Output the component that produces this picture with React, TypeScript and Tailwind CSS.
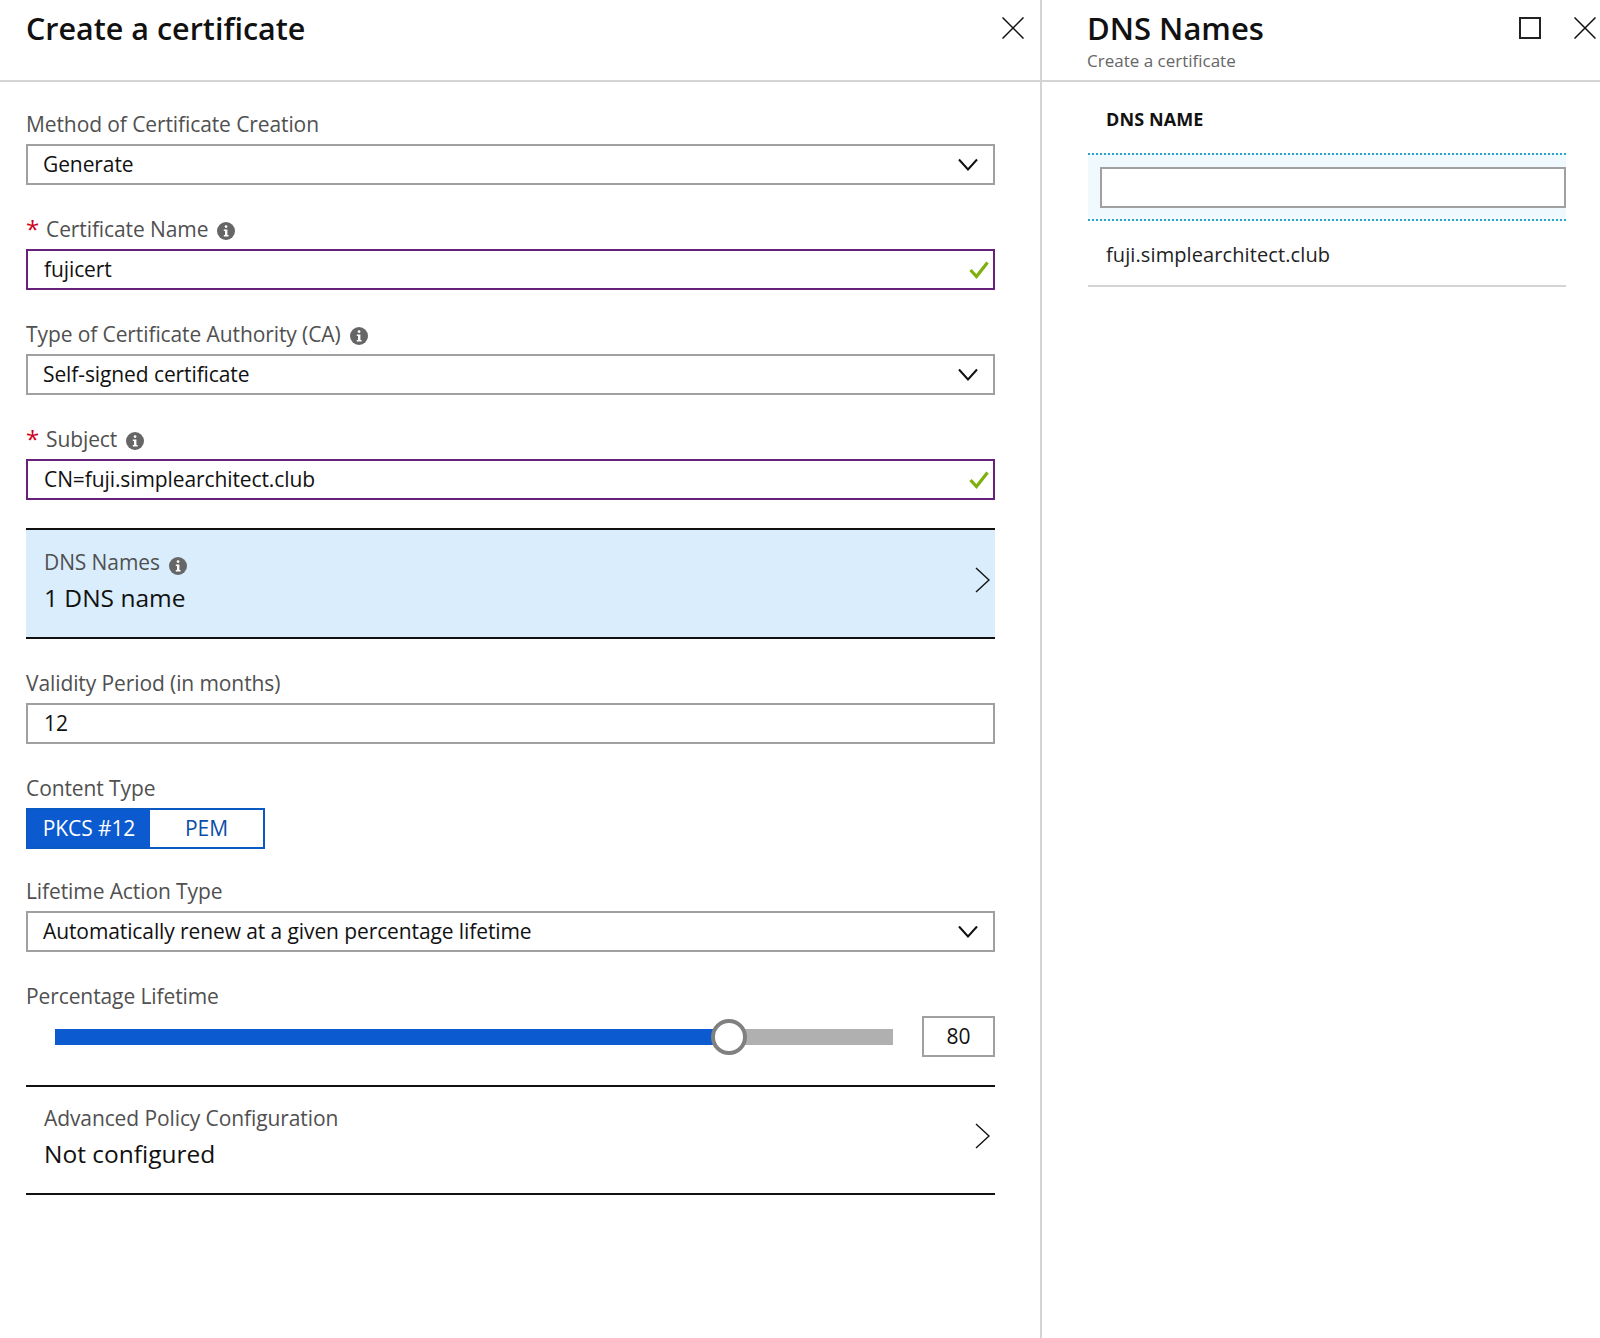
import * as React from "react"

const font = "font-['Open_Sans',sans-serif]"

function InfoIcon() {
  return (
    <svg viewBox="0 0 18 18" className="ml-[9px] mt-[6px] size-[18px] shrink-0">
      <circle cx="9" cy="9" r="9" fill="#666666" />
      <rect x="7.7" y="3.2" width="2.7" height="2.7" rx="1.3" fill="#ffffff" />
      <path d="M6.8 7.4h3.6v5.6h1.2v1.6H6.8V13h1.2V9H6.8z" fill="#ffffff" />
    </svg>
  )
}

function Chevron() {
  return (
    <svg viewBox="0 0 20 14" className="h-[14px] w-[20px]" fill="none">
      <path d="M1 1.5 10 11.5 19 1.5" stroke="#111111" strokeWidth="2" />
    </svg>
  )
}

function RightChevron() {
  return (
    <svg viewBox="0 0 15 26" className="mb-[2px] h-[26px] w-[15px]" fill="none">
      <path d="M1 1 14 13 1 25" stroke="#111111" strokeWidth="1.4" />
    </svg>
  )
}

function Check() {
  return (
    <svg viewBox="0 0 20 18" className="h-[18px] w-[20px]" fill="none">
      <path d="M1.5 9 7.5 15.5 18.5 1.5" stroke="#7fb00e" strokeWidth="3.2" />
    </svg>
  )
}

function CloseIcon() {
  return (
    <svg viewBox="0 0 22 22" className="size-[22px]" fill="none">
      <path d="M.5.5 21.5 21.5M21.5.5.5 21.5" stroke="#111111" strokeWidth="1.5" />
    </svg>
  )
}

function Label({ text, required, info }: { text: string; required?: boolean; info?: boolean }) {
  return (
    <div className="flex h-[33px] items-start text-[21px] leading-[26px] tracking-[-0.1px] text-[#505050]">
      {required && <span className="mr-[10px] w-[10px] text-[24px] leading-[26px] text-[#d0021b]">*</span>}
      <span>{text}</span>
      {info && <InfoIcon />}
    </div>
  )
}

function SelectBox({ value }: { value: string }) {
  return (
    <div className="flex h-[41px] items-center justify-between border-2 border-[#a0a0a0] pl-[15px] pr-[15px] text-[21px] tracking-[-0.1px] text-[#111111]">
      <span>{value}</span>
      <Chevron />
    </div>
  )
}

function TextBox({ value, valid }: { value: string; valid?: boolean }) {
  return (
    <div
      className={`flex h-[41px] items-center justify-between border-2 pl-[16px] pr-[4px] text-[21px] tracking-[-0.1px] text-[#111111] ${
        valid ? "border-[#68217a]" : "border-[#a0a0a0]"
      }`}
    >
      <span>{value}</span>
      {valid && <Check />}
    </div>
  )
}

function SummaryRow({ label, value, info, active }: { label: string; value: string; info?: boolean; active?: boolean }) {
  return (
    <div
      className={`flex items-center justify-between border-y-2 border-[#111111] pb-[6px] pl-[18px] pr-[5px] ${
        active ? "h-[111px] bg-[#d9edfc]" : "h-[110px] bg-white"
      }`}
    >
      <div>
        <div className="flex h-[30px] items-center text-[21px] tracking-[-0.1px] text-[#505050]">
          {label}
          {info && <InfoIcon />}
        </div>
        <div className="mt-[4px] text-[24.5px] leading-[32px] text-[#111111]">{value}</div>
      </div>
      <RightChevron />
    </div>
  )
}

export default function App() {
  return (
    <div className={`flex h-[1338px] w-[1600px] overflow-hidden bg-white ${font}`}>
      <section className="w-[1042px] shrink-0 border-r-2 border-[#d4d4d4]">
        <header className="flex h-[82px] items-start justify-between border-b-2 border-[#d4d4d4] pl-[26px] pr-[16px] pt-[8px]">
          <h1 className="text-[30.5px] font-semibold leading-[40px] text-[#111111]">Create a certificate</h1>
          <div className="mt-[9px]">
            <CloseIcon />
          </div>
        </header>
        <div className="w-[995px] pl-[26px] pt-[29px]">
          <Label text="Method of Certificate Creation" />
          <SelectBox value="Generate" />
          <div className="mt-[31px]">
            <Label text="Certificate Name" required info />
            <TextBox value="fujicert" valid />
          </div>
          <div className="mt-[31px]">
            <Label text="Type of Certificate Authority (CA)" info />
            <SelectBox value="Self-signed certificate" />
          </div>
          <div className="mt-[31px]">
            <Label text="Subject" required info />
            <TextBox value="CN=fuji.simplearchitect.club" valid />
          </div>
          <div className="mt-[28px]">
            <SummaryRow label="DNS Names" value="1 DNS name" info active />
          </div>
          <div className="mt-[31px]">
            <Label text="Validity Period (in months)" />
            <TextBox value="12" />
          </div>
          <div className="mt-[31px]">
            <Label text="Content Type" />
            <div className="flex h-[41px] w-[239px] border-2 border-[#0b5ac4] text-[21px] tracking-[-0.1px]">
              <div className="flex w-[122px] items-center justify-center bg-[#0b5ad0] pt-[1px] text-white">PKCS #12</div>
              <div className="flex flex-1 items-center justify-center pt-[1px] text-[#0b4ea8]">PEM</div>
            </div>
          </div>
          <div className="mt-[29px]">
            <Label text="Lifetime Action Type" />
            <SelectBox value="Automatically renew at a given percentage lifetime" />
          </div>
          <div className="mt-[31px]">
            <Label text="Percentage Lifetime" />
            <div className="flex h-[41px] items-center pl-[29px]">
              <div className="relative flex h-[16px] w-[838px] bg-[#b0b0b0]">
                <div className="w-[660px] bg-[#0b5ad0]" />
                <div className="absolute left-[656px] top-[-10px] size-[36px] rounded-full border-[4px] border-[#808080] bg-white" />
              </div>
              <div className="ml-[29px] flex h-[41px] w-[73px] items-center justify-center border-2 border-[#a0a0a0] text-[21px] text-[#111111]">
                80
              </div>
            </div>
          </div>
          <div className="mt-[28px]">
            <SummaryRow label="Advanced Policy Configuration" value="Not configured" />
          </div>
        </div>
      </section>
      <section className="flex-1">
        <header className="relative h-[82px] border-b-2 border-[#d4d4d4] pl-[45px] pt-[8px]">
          <h2 className="text-[31px] font-semibold leading-[40px] text-[#111111]">DNS Names</h2>
          <p className="pt-[1px] text-[17px] leading-[24px] text-[#666666]">Create a certificate</p>
          <div className="absolute left-[477px] top-[17px] size-[22px] border-2 border-[#222222]" />
          <div className="absolute left-[532px] top-[17px]">
            <CloseIcon />
          </div>
        </header>
        <div className="w-[524px] pl-[46px]">
          <div className="flex h-[71px] items-center pl-[18px] pt-[4px] text-[18px] font-bold tracking-[0.1px] text-[#111111]">DNS NAME</div>
          <div className="h-[68px] border-y-2 border-dotted border-[#2aa5c8] bg-[#f0f9fd] py-[12px] pl-[12px]">
            <div className="h-[41px] border-2 border-[#a0a0a0] bg-white" />
          </div>
          <div className="flex h-[66px] items-center border-b-2 border-[#d4d4d4] pl-[18px] pt-[4px] text-[20px] tracking-[0.1px] text-[#222222]">
            fuji.simplearchitect.club
          </div>
        </div>
      </section>
    </div>
  )
}
